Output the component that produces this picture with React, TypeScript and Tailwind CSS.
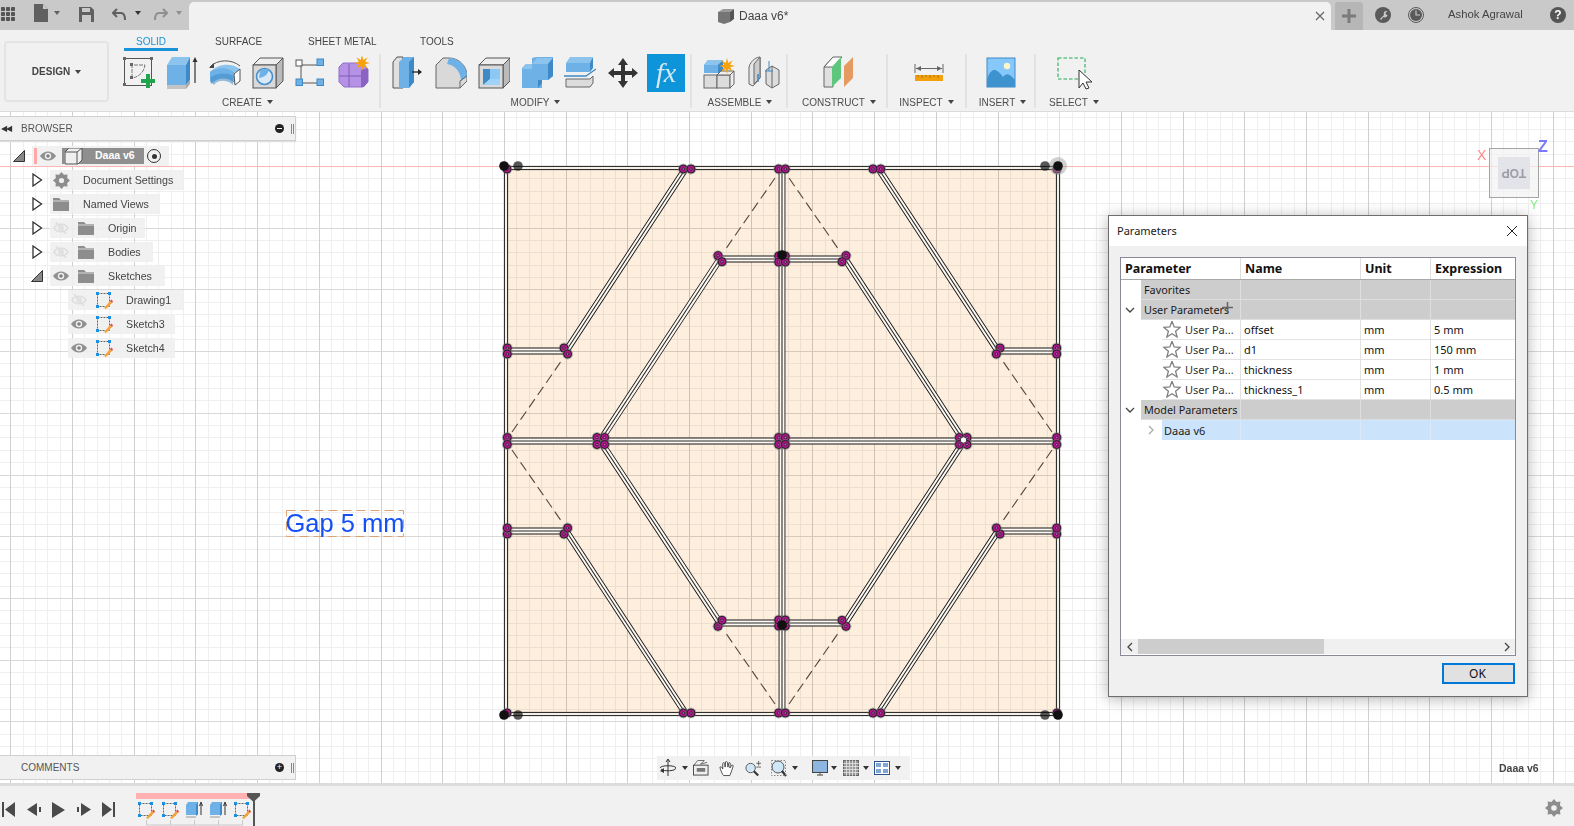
import React from "react";

const star = (cx: number, cy: number, r1: number, r2: number, n = 8) => {
  let d = "";
  for (let i = 0; i < n * 2; i++) {
    const r = i % 2 ? r2 : r1;
    const a = (Math.PI * i) / n - Math.PI / 2;
    d += `${i ? "L" : "M"}${(cx + r * Math.cos(a)).toFixed(1)} ${(cy + r * Math.sin(a)).toFixed(1)}`;
  }
  return d + "Z";
};

const Ico = ({ w = 32, h = 34, children }: { w?: number; h?: number; children: React.ReactNode }) => (
  <svg width={w} height={h} viewBox={`0 0 ${w} ${h}`} className="block shrink-0">{children}</svg>
);

const BLUE = "#6db1e6";
const DBLUE = "#3f8ac6";

const SketchIco = () => (
  <Ico>
    <rect x="1.5" y="2.5" width="27" height="27" fill="none" stroke="#555" strokeWidth="1" />
    <path d="M9 22V9H22C21 16 16 21 9 22Z" fill="none" stroke="#777" strokeDasharray="4 1" />
    {[[0, 1], [27, 1], [0, 27], [7, 7], [7, 20]].map(([x, y]) => (
      <rect key={`${x}${y}`} x={x} y={y} width="3" height="3" fill="#666" />
    ))}
    <path d="M23 18h4v5h5v4h-5v5h-4v-5h-5v-4h5z" fill="#1fa54c" />
  </Ico>
);
const ExtrudeIco = () => (
  <Ico>
    <path d="M1 9L6 1H24L20 9Z" fill="#8cc4ee" />
    <rect x="1" y="9" width="19" height="20" fill={BLUE} />
    <path d="M20 9L24 1V24L20 29Z" fill={DBLUE} />
    <path d="M1 29H20V33H1Z" fill="#c4c4c4" />
    <path d="M20 29L24 24V28L20 33Z" fill="#aaa" />
    <path d="M29 27V3" stroke="#333" strokeWidth="1.2" />
    <path d="M29 1L26.5 6H31.5Z" fill="#333" />
  </Ico>
);
const RevolveIco = () => (
  <Ico w={33} h={32}>
    <path d="M1 10C8 2 23 2 31 9" fill="none" stroke="#555" strokeWidth="1" />
    <path d="M0 11L5 6V11Z" fill="#444" />
    <path d="M1 21C3 12 20 9 27 17L31 12C22 5 8 7 1 15Z" fill="#8cc4ee" />
    <path d="M1 15C8 10 20 10 26 16L27 28C20 19 8 20 2 27L1 22Z" fill={BLUE} />
    <path d="M2 20C8 16 18 15 24 19V28C18 22 8 23 5 28L1 24Z" fill={DBLUE} opacity=".55" />
    <path d="M25 17L31 12V24L26 28Z" fill="#fff" stroke="#555" />
  </Ico>
);
const HoleIco = () => (
  <Ico>
    <path d="M1 9L8 2H31L24 9Z" fill="#eee" stroke="#555" />
    <path d="M24 9L31 2V25L24 32Z" fill="#bbb" stroke="#555" />
    <rect x="1" y="9" width="23" height="23" fill="#d9d9d9" stroke="#555" />
    <circle cx="12.5" cy="20.5" r="8" fill="#d8eafa" stroke="#4a8fc7" strokeWidth="1.6" />
    <path d="M8 15A8 8 0 0 1 17 14C15 19 13 21 7 22Z" fill={BLUE} />
  </Ico>
);
const PatternIco = () => (
  <Ico>
    <path d="M6 9H24M6 9V27M6 27H24" stroke="#555" strokeWidth="1" />
    <rect x="1" y="4" width="6" height="6" fill="#fff" stroke="#555" />
    <rect x="22" y="3" width="6.500" height="6.500" fill={BLUE} stroke="#3f8ac6" />
    <rect x="1" y="23" width="6.500" height="6.500" fill={BLUE} stroke="#3f8ac6" />
    <rect x="22" y="23" width="6.500" height="6.500" fill={BLUE} stroke="#3f8ac6" />
  </Ico>
);
const FormIco = () => (
  <Ico>
    <path d="M5 7H24L30 13V26L25 31H6L1 26V11Z" fill="#b592e6" stroke="#9270cc" />
    <path d="M23 14V31H26L30 26V12Z" fill="#8a63c4" />
    <path d="M1 20H23M11 8V31" stroke="#7e5cb8" strokeWidth="1" fill="none" />
    <path d={star(24, 7, 8, 3.400, 8)} fill="#f7a10c" />
  </Ico>
);
const PressPullIco = () => (
  <Ico>
    <path d="M1 6L5 1H11V32H1Z" fill="#e0e0e0" stroke="#555" />
    <path d="M7 6L12 1H22V26L17 32H7Z" fill={BLUE} />
    <path d="M17 6L22 1V26L17 32Z" fill={DBLUE} />
    <path d="M20 16H29" stroke="#222" strokeWidth="1.300" />
    <path d="M30 16L26 13V19Z" fill="#222" />
  </Ico>
);
const FilletIco = () => (
  <Ico>
    <path d="M1 32V9L8 2H14C24 2 32 10 32 20V25L25 32Z" fill="#d9d9d9" stroke="#666" />
    <path d="M14 2C24 2 32 10 32 20L26 25C26 16 20 9 12 8Z" fill={BLUE} />
    <path d="M25 32V25L32 20" fill="none" stroke="#666" />
  </Ico>
);
const ShellIco = () => (
  <Ico>
    <path d="M1 9L8 2H32L25 9Z" fill="#eee" stroke="#555" />
    <path d="M25 9L32 2V25L25 32Z" fill="#bbb" stroke="#555" />
    <rect x="1" y="9" width="24" height="23" fill="#dadada" stroke="#555" />
    <rect x="5" y="13" width="17" height="16" fill="#8cc8f5" />
    <path d="M5 13H12V23L5 29Z" fill="#3f8ac6" />
    <path d="M12 23H22V29H5Z" fill="#9ed2f8" />
  </Ico>
);
const CombineIco = () => (
  <Ico>
    <path d="M11 2L15 1V1H32V20L27 24H21V32H1V12L5 8H11Z" fill={BLUE} />
    <path d="M11 8L16 2H32L27 8Z" fill="#8cc4ee" />
    <path d="M1 13L5 8H11V13Z" fill="#8cc4ee" />
    <path d="M27 8L32 2V20L27 24Z" fill={DBLUE} />
    <path d="M17 24H21V27L17 32Z" fill={DBLUE} />
  </Ico>
);
const OffsetIco = () => (
  <Ico>
    <path d="M2 7L6 1H29L27 7Z" fill="#8cc4ee" />
    <rect x="2" y="7" width="24" height="9" fill={BLUE} />
    <path d="M26 7L29 1V12L26 16Z" fill={DBLUE} />
    <path d="M0 20H22L32 13" stroke="#3f8ac6" strokeWidth="1.300" fill="none" />
    <path d="M2 23H26L29 20V27L26 31H2Z" fill="#dcdcdc" stroke="#666" />
  </Ico>
);
const MoveIco = () => (
  <Ico>
    <path d="M16 2L21 9H18V15H25V12L31 17L25 22V19H18V25H21L16 32L11 25H14V19H7V22L1 17L7 12V15H14V9H11Z" fill="#333" />
  </Ico>
);
const AssembleIco = () => (
  <Ico>
    <path d="M1 9L5 4H17V17H1Z" fill={BLUE} />
    <path d="M1 9L5 4H20L16 9Z" fill="#8cc4ee" />
    <path d="M15 9L20 4V17H15Z" fill={DBLUE} />
    <rect x="1" y="19" width="13" height="13" fill="#dcdcdc" stroke="#666" />
    <rect x="14" y="19" width="13" height="13" fill="#dcdcdc" stroke="#666" />
    <path d="M14 19L18 15H31L27 19ZM27 19L31 15V28L27 32Z" fill="#eee" stroke="#666" />
    <path d={star(24, 10, 8, 3.400, 8)} fill="#f7a10c" />
  </Ico>
);
const JointIco = () => (
  <Ico>
    <path d="M1 11C3 4 9 1 12 1V22L5 30L1 28Z" fill="#e6e6e6" stroke="#666" />
    <path d="M6 8L12 1V22L6 28Z" fill="#ccc" stroke="#666" />
    <path d="M18 14L24 10L31 14V28L24 32L18 28Z" fill="#ddd" stroke="#666" />
    <path d="M24 10V32" stroke="#666" />
    <path d="M10 18V26" stroke="#3f8ac6" strokeWidth="1.600" />
    <path d="M21 5V15M17 15H25" stroke="#3f8ac6" strokeWidth="1" />
  </Ico>
);
const ConstructIco = () => (
  <Ico w={31}>
    <path d="M1 11L10 1V31H1Z" fill="#e0e0e0" stroke="#666" />
    <path d="M1 11L10 1H19L10 11Z" fill="#fff" stroke="#666" />
    <path d="M9 11L18 1V22L9 31Z" fill="#5fc67d" />
    <path d="M21 10L30 1V22L21 31Z" fill="#e59a62" />
  </Ico>
);
const RulerIco = () => (
  <Ico w={30}>
    <path d="M1 8V17M29 8V17" stroke="#666" />
    <path d="M2 12.500H28" stroke="#666" />
    <path d="M2 12.500L7 10V15ZM28 12.500L23 10V15Z" fill="#666" />
    <rect x="1" y="19" width="28" height="6" fill="#f2a10d" />
    <path d="M4 19v2M8 19v3M12 19v2M16 19v3M20 19v2M24 19v3" stroke="#9a6a10" strokeWidth=".8" />
  </Ico>
);
const InsertIco = () => (
  <Ico w={30}>
    <rect x="1" y="2" width="28" height="29" fill="#87c8fb" stroke="#3f8ac6" />
    <circle cx="21" cy="10" r="3.200" fill="#fdf6c8" />
    <path d="M1 23C6 10 11 13 17 21C21 16 24 18 29 24V31H1Z" fill="#3e92ce" />
  </Ico>
);
const SelectIco = () => (
  <Ico w={36}>
    <rect x="1" y="2" width="27" height="21" fill="none" stroke="#25ad56" strokeWidth="1.100" strokeDasharray="3.500 2" />
    <path d="M22 14V32L26 27L29 33L32 32L29 26H35Z" fill="#fff" stroke="#333" strokeWidth="1" />
  </Ico>
);

const Tool = ({ children, className = "" }: { children: React.ReactNode; className?: string }) => (
  <div className={`flex items-center ${className}`}>{children}</div>
);

const Caret = ({ className = "" }: { className?: string }) => (
  <span className={`inline-block w-0 h-0 border-x-[3px] border-x-transparent border-t-[4px] border-t-[#444] ${className}`} />
);

const Group = ({ label, width, pad, gap, children, last, labelCls = "" }: { label: string; width: string; pad: string; gap: string; children: React.ReactNode; last?: boolean; labelCls?: string }) => (
  <div className={`${width} flex flex-col ${last ? "" : "border-r-2 border-[#e2e2e2]"}`}>
    <div className={`h-[38px] flex items-center ${pad} ${gap}`}>{children}</div>
    <div className={`h-[16px] flex items-center justify-center gap-[5px] text-[10px] text-[#4c4c4c] pt-[4px] ${labelCls}`}>
      {label}
      <Caret />
    </div>
  </div>
);

const Eye = ({ off }: { off?: boolean }) => (
  <svg width="16" height="12" viewBox="0 0 16 12" className="block shrink-0">
    {off ? (
      <g stroke="#dedede" fill="none" strokeWidth="1.500">
        <path d="M1 6C4 1 12 1 15 6C12 11 4 11 1 6Z" />
        <circle cx="8" cy="6" r="2" />
        <path d="M3 0L13 12" />
      </g>
    ) : (
      <g>
        <path d="M0 6C4 0 12 0 16 6C12 12 4 12 0 6Z" fill="#909090" />
        <circle cx="8" cy="6" r="3.200" fill="#eee" />
        <circle cx="8" cy="6" r="1.800" fill="#808080" />
      </g>
    )}
  </svg>
);
const Folder = () => (
  <svg width="16" height="13" viewBox="0 0 16 13" className="block shrink-0">
    <path d="M0 0H6L8 2H16V13H0Z" fill="#8d8d8d" />
    <path d="M0 3H16" stroke="#eee" strokeWidth=".8" />
  </svg>
);
const Gear = () => (
  <svg width="17" height="17" viewBox="0 0 17 17" className="block shrink-0">
    <path d={star(8.500, 8.500, 8.500, 6.200, 8)} fill="#8d8d8d" />
    <circle cx="8.500" cy="8.500" r="5.600" fill="#8d8d8d" />
    <circle cx="8.500" cy="8.500" r="2.600" fill="#eee" />
  </svg>
);
const SketchMini = () => (
  <svg width="17" height="17" viewBox="0 0 17 17" className="block shrink-0">
    <rect x="1.500" y="1.500" width="12" height="13" fill="none" stroke="#666" strokeDasharray="2 1" />
    <rect x="0" y="0" width="3" height="3" fill="#1b8fe0" />
    <rect x="12" y="0" width="3" height="3" fill="#1b8fe0" />
    <rect x="0" y="13" width="3" height="3" fill="#1b8fe0" />
    <path d="M8 16L14 9L16 11L10 17Z" fill="#f2a33c" />
    <path d="M14 9L15.500 7.500L17 9.500L16 11Z" fill="#e8453c" />
  </svg>
);
const TriOpen = () => (
  <svg width="11" height="14" viewBox="0 0 11 14" className="block">
    <path d="M1 1L9.500 7L1 13Z" fill="#fff" stroke="#333" strokeWidth="1.300" />
  </svg>
);
const TriDown = () => (
  <svg width="12" height="12" viewBox="0 0 12 12" className="block">
    <path d="M11.500 .5V11.500H.5Z" fill="#888" stroke="#333" />
  </svg>
);

const Row = ({ ml, w, tri, children }: { ml: string; w: string; tri?: React.ReactNode; children: React.ReactNode }) => (
  <div className="flex h-5 items-center mb-1 relative">
    <div className={`${ml} ${w} h-5 flex items-center bg-[#f0f0f0]/90 text-[#444] text-[10.700px]`}>{children}</div>
    {tri}
  </div>
);

const OTri = () => (
  <div className="absolute left-[32px] top-[3px]"><TriOpen /></div>
);

const Label = ({ className, children }: { className: string; children: React.ReactNode }) => (
  <span className={`${className} pt-[1px]`}>{children}</span>
);

const Browser = () => (
  <div className="absolute left-0 top-[4px] w-[296px]">
    <div className="h-[25px] bg-[#f1f1f1] border border-l-0 border-[#cfcfcf] flex items-center text-[10px] text-[#555] relative shadow-[0_1px_1px_#ddd]">
      <span className="absolute left-[1px] text-[8px] text-[#333] tracking-[-1px]">◀◀</span>
      <span className="ml-[21px]">BROWSER</span>
      <span className="absolute left-[275px] w-[9px] h-[9px] rounded-full bg-[#222] flex items-center justify-center"><span className="w-[5px] h-[1.500px] bg-white" /></span>
      <span className="absolute left-[291px] w-[3px] h-[10px] border-x border-[#888]" />
    </div>
    <div className="mt-[5px]">
      <div className="flex h-5 items-center mb-1 relative">
        <div className="absolute left-[13px] top-[4px]"><TriDown /></div>
        <div className="ml-[32px] w-[137px] h-5 flex items-center bg-[#f0f0f0]/90">
          <span className="ml-[2px] w-[3px] h-4 bg-[#ffa8a8]" />
          <span className="ml-[3px]"><Eye /></span>
          <span className="ml-[6px] w-[82px] h-4 bg-[#8f8f8f] flex items-center relative">
            <svg width="18" height="17" viewBox="0 0 18 17" className="absolute left-[3px] top-0">
              <path d="M0 4L4 0H17V12L13 16H0Z" fill="#efefef" stroke="#555" />
              <path d="M12 16V4L17 0M0 4H12" fill="none" stroke="#555" />
            </svg>
            <span className="ml-[33px] text-[10.500px] font-bold text-white">Daaa v6</span>
          </span>
          <span className="ml-[3px] w-[14px] h-[14px] rounded-full border border-[#333] flex items-center justify-center"><span className="w-[5px] h-[5px] rounded-full bg-[#333]" /></span>
        </div>
      </div>
      <Row ml="ml-[50px]" w="w-[133px]" tri={<OTri />}>
        <span className="ml-[3px]"><Gear /></span>
        <Label className="ml-[13px]">Document Settings</Label>
      </Row>
      <Row ml="ml-[50px]" w="w-[110px]" tri={<OTri />}>
        <span className="ml-[3px]"><Folder /></span>
        <Label className="ml-[14px]">Named Views</Label>
      </Row>
      <Row ml="ml-[50px]" w="w-[95px]" tri={<OTri />}>
        <span className="ml-[3px]"><Eye off /></span>
        <span className="ml-[9px]"><Folder /></span>
        <Label className="ml-[14px]">Origin</Label>
      </Row>
      <Row ml="ml-[50px]" w="w-[103px]" tri={<OTri />}>
        <span className="ml-[3px]"><Eye off /></span>
        <span className="ml-[9px]"><Folder /></span>
        <Label className="ml-[14px]">Bodies</Label>
      </Row>
      <Row ml="ml-[50px]" w="w-[115px]" tri={<div className="absolute left-[31px] top-[4px]"><TriDown /></div>}>
        <span className="ml-[3px]"><Eye /></span>
        <span className="ml-[9px]"><Folder /></span>
        <Label className="ml-[14px]">Sketches</Label>
      </Row>
      <Row ml="ml-[68px]" w="w-[115px]">
        <span className="ml-[3px]"><Eye off /></span>
        <span className="ml-[9px]"><SketchMini /></span>
        <Label className="ml-[13px]">Drawing1</Label>
      </Row>
      <Row ml="ml-[68px]" w="w-[107px]">
        <span className="ml-[3px]"><Eye /></span>
        <span className="ml-[9px]"><SketchMini /></span>
        <Label className="ml-[13px]">Sketch3</Label>
      </Row>
      <Row ml="ml-[68px]" w="w-[107px]">
        <span className="ml-[3px]"><Eye /></span>
        <span className="ml-[9px]"><SketchMini /></span>
        <Label className="ml-[13px]">Sketch4</Label>
      </Row>
    </div>
  </div>
);

const Chev = ({ dir = "down", light }: { dir?: "down" | "left" | "right"; light?: boolean }) => (
  <svg width="10" height="10" viewBox="0 0 10 10" className="block">
    <path d={dir === "right" ? "M3 1L7 5L3 9" : dir === "left" ? "M7 1L3 5L7 9" : "M1 3L5 7L9 3"} fill="none" stroke={light ? "#aaa" : "#444"} strokeWidth="1.300" />
  </svg>
);

const StarO = () => (
  <svg width="18" height="17" viewBox="0 0 18 17" className="block">
    <path d={star(9, 9, 8.700, 3.800, 5)} fill="#fff" stroke="#808080" strokeWidth="1.300" />
  </svg>
);

const GrayRow = ({ label, chev }: { label: string; chev?: boolean }) => (
  <div className="flex h-5">
    <div className="w-[20px] flex items-center justify-center pr-[2px]">{chev && <Chev />}</div>
    <div className="w-[100px] bg-[#cdcdcd] border-r border-b border-[#dedede] flex items-center pl-[3px] pt-[2px] text-[10.800px] whitespace-nowrap">{label}</div>
    <div className="w-[120px] bg-[#cdcdcd] border-r border-b border-[#dedede]" />
    <div className="w-[70px] bg-[#cdcdcd] border-r border-b border-[#dedede]" />
    <div className="flex-1 bg-[#cdcdcd] border-b border-[#dedede]" />
  </div>
);

const ParamRow = ({ name, exp }: { name: string; exp: string }) => (
  <div className="flex h-5 text-[#111]">
    <div className="w-[41px]" />
    <div className="w-[79px] border-r border-b border-[#e2e2e2] flex items-center">
      <span className="ml-[1px]"><StarO /></span>
      <span className="ml-[4px] pt-[2px] text-[#333]">User Pa...</span>
    </div>
    <div className="w-[120px] border-r border-b border-[#e2e2e2] flex items-center pl-[3px] pt-[2px]">{name}</div>
    <div className="w-[70px] border-r border-b border-[#e2e2e2] flex items-center pl-[3px] pt-[2px]">mm</div>
    <div className="flex-1 border-b border-[#e2e2e2] flex items-center pl-[3px] pt-[2px]">{exp}</div>
  </div>
);

const Dialog = () => (
  <div className="absolute left-[1108px] top-[103px] w-[420px] h-[482px] bg-[#f0f0f0] border border-[#6e6e6e] shadow-[0_2px_14px_rgba(0,0,0,0.3)] flex flex-col font-['Noto_Sans',sans-serif] text-[11px] text-[#1a1a1a]">
    <div className="h-[30px] bg-white flex items-center justify-between shrink-0">
      <span className="ml-[8px] text-[11px]">Parameters</span>
      <svg width="12" height="12" viewBox="0 0 12 12" className="mr-[9px]"><path d="M1 1L11 11M11 1L1 11" stroke="#222" strokeWidth="1" /></svg>
    </div>
    <div className="mx-[11px] mt-[11px] h-[399px] bg-white border border-[#8a8a96] flex flex-col">
      <div className="flex h-[22px] text-[12.500px] font-bold text-[#111] border-b border-[#a8a8a8]">
        <div className="w-[120px] pl-[4px] pt-[2px] border-r border-[#dedede] flex items-center">Parameter</div>
        <div className="w-[120px] pl-[4px] pt-[2px] border-r border-[#dedede] flex items-center">Name</div>
        <div className="w-[70px] pl-[4px] pt-[2px] border-r border-[#dedede] flex items-center">Unit</div>
        <div className="flex-1 pl-[4px] pt-[2px] flex items-center">Expression</div>
      </div>
      <GrayRow label="Favorites" />
      <div className="relative">
        <GrayRow label="User Parameters" chev />
        <svg width="11" height="11" viewBox="0 0 11 11" className="absolute left-[101px] top-[2px]"><path d="M5.500 0V11M0 5.500H11" stroke="#666" strokeWidth="1.500" /></svg>
      </div>
      <ParamRow name="offset" exp="5 mm" />
      <ParamRow name="d1" exp="150 mm" />
      <ParamRow name="thickness" exp="1 mm" />
      <ParamRow name="thickness_1" exp="0.5 mm" />
      <GrayRow label="Model Parameters" chev />
      <div className="flex h-5">
        <div className="w-[41px] flex items-center justify-end pr-[6px]"><Chev dir="right" light /></div>
        <div className="w-[79px] bg-[#cce4fb] border-r border-[#dbe9f6] flex items-center pl-[2px] pt-[2px]">Daaa v6</div>
        <div className="w-[120px] bg-[#cce4fb] border-r border-[#dbe9f6]" />
        <div className="w-[70px] bg-[#cce4fb] border-r border-[#dbe9f6]" />
        <div className="flex-1 bg-[#cce4fb]" />
      </div>
      <div className="flex-1" />
      <div className="h-[15px] mb-[1px] bg-[#f0f0f0] flex items-center">
        <span className="w-[17px] flex justify-center"><Chev dir="left" /></span>
        <span className="w-[186px] h-[15px] bg-[#cdcdcd]" />
        <span className="flex-1" />
        <span className="w-[17px] flex justify-center"><Chev dir="right" /></span>
      </div>
    </div>
    <div className="flex justify-end mt-[7px] mr-[12px]">
      <div className="w-[73px] h-[21px] pr-[2px] bg-[#e1e1e1] border-2 border-[#0078d7] flex items-center justify-center text-[12px] text-[#111]">OK</div>
    </div>
  </div>
);

const inner: [number, number][][] = [
  [[686, 168], [566, 351], [506, 351]],
  [[878, 168], [998, 351], [1058, 351]],
  [[566, 531], [506, 531]],
  [[686, 714], [566, 531]],
  [[878, 714], [998, 531], [1058, 531]],
  [[782, 168], [782, 714]],
  [[506, 441], [1058, 441]],
  [[720, 259], [845, 259], [964, 441], [845, 623], [720, 623], [600, 441], [720, 259]],
];
const toD = (p: [number, number][]) => p.map(([x, y], i) => `${i ? "L" : "M"}${x} ${y}`).join("");

const quad: [number, number][] = [
  [683.3, 169], [691, 169], [778.7, 169], [507, 169],
  [718, 255.7], [722, 261.7], [778.7, 256], [778.7, 262],
  [507.3, 348], [507.3, 354], [564, 348], [567.6, 354],
  [597, 437.5], [604.6, 437.5], [507.3, 437.5], [778.7, 437.5],
];
const points: [number, number][] = quad.flatMap(([x, y]) => [
  [x, y], [1564 - x, y], [x, 882 - y], [1564 - x, 882 - y],
] as [number, number][]);

const dashed = [
  [775, 178, 725, 250], [789, 178, 839, 250], [775, 704, 725, 632], [789, 704, 839, 632],
  [512, 432, 562, 360], [512, 450, 562, 522], [1052, 432, 1002, 360], [1052, 450, 1002, 522],
];

const xs = Array.from({ length: 130 }, (_, i) => 10.3 - 12.34 + i * 12.34);
const ys = Array.from({ length: 57 }, (_, i) => 166 - 12.34 * 5 + i * 12.34);

const Scene = () => (
  <svg width="1574" height="671" viewBox="0 112 1574 671" className="absolute left-0 top-0 block">
    <g shapeRendering="crispEdges">
      {xs.map((x, i) => (i - 1) % 5 !== 0 && <path key={x} d={`M${Math.round(x) + 0.5} 112V783`} stroke="#efefef" />)}
      {ys.map((y, i) => i % 5 !== 0 && <path key={y} d={`M0 ${Math.round(y) + 0.5}H1574`} stroke="#efefef" />)}
      {xs.map((x, i) => (i - 1) % 5 === 0 && <path key={x} d={`M${Math.round(x) + 0.5} 112V783`} stroke="#d0d0d0" />)}
      {ys.map((y, i) => i % 5 === 0 && i !== 5 && <path key={y} d={`M0 ${Math.round(y) + 0.5}H1574`} stroke="#d8d8d8" />)}
      <path d="M0 166.500H1574" stroke="#ffb4b4" />
      <path d="M1059.500 112V166" stroke="#c6f0c6" />
    </g>
    <rect x="506" y="168" width="552" height="546" fill="#fdeedd" className="mix-blend-multiply" />
    {dashed.map(([a, b, c, d]) => (
      <path key={`${a}${b}${c}`} d={`M${a} ${b}L${c} ${d}`} stroke="#54463c" strokeWidth="1.100" strokeDasharray="10 5" />
    ))}
    <rect x="506" y="168" width="552" height="546" fill="none" stroke="#1a1a1a" strokeWidth="4.200" />
    <rect x="506" y="168" width="552" height="546" fill="none" stroke="#f6f0ea" strokeWidth="2.200" />
    {inner.map((p) => <path key={toD(p)} d={toD(p)} fill="none" stroke="#161616" strokeWidth="6.800" />)}
    {inner.map((p) => <path key={toD(p)} d={toD(p)} fill="none" stroke="#fdf8f2" strokeWidth="5" />)}
    {inner.map((p) => <path key={toD(p)} d={toD(p)} fill="none" stroke="#2a2a2a" strokeWidth="1.100" />)}
    {points.map(([x, y]) => (
      <g key={`${x}-${y}`}>
        <circle cx={x} cy={y} r="5.400" fill="#777" opacity=".55" />
        <circle cx={x} cy={y} r="4" fill="#b3128f" stroke="#222" strokeWidth="1" />
        <circle cx={x} cy={y} r="1.300" fill="#c85cb4" stroke="#222" strokeWidth=".8" />
      </g>
    ))}
    <circle cx="1058" cy="166" r="9" fill="#999" opacity=".45" />
    {[[504, 166, 1], [518, 166, .7], [1045, 166, .7], [1058, 166, 1], [504, 715, 1], [518, 715, .7], [1045, 715, .7], [1058, 715, 1], [782, 255, 1], [782, 625, 1]].map(([x, y, o]) => (
      <circle key={`${x}-${y}`} cx={x} cy={y} r="4.800" fill="#111" opacity={o} />
    ))}
    <circle cx="963.500" cy="440" r="3.200" fill="#fff" stroke="#333" />
  </svg>
);

const ViewCube = () => (
  <div className="absolute left-[1489px] top-[36px] w-[50px] h-[50px] border border-[#a4a4a4] bg-[#f2f2f2]/70 flex items-center justify-center">
    <div className="w-[32px] h-[32px] bg-[#e2e4ea] flex items-center justify-center text-[12px] font-bold text-[#9c9ca6] rotate-180">TOP</div>
    <span className="absolute -left-[13px] -top-[4px] text-[14px] text-[#ff8a8a]">X</span>
    <span className="absolute left-[48px] -top-[14px] text-[16px] font-bold text-[#7a7aff]">Z</span>
    <span className="absolute left-[40px] top-[47px] text-[12px] text-[#80ee80]">Y</span>
  </div>
);

const Caret2 = ({ className = "" }: { className?: string }) => <span className={`block w-0 h-0 shrink-0 border-x-[3px] border-x-transparent border-t-[4px] border-t-[#333] ${className}`} />;

const NavBar = () => (
  <div className="absolute left-[657px] top-[644px] w-[253px] h-[24px] bg-[#f1f1f1] flex items-center pl-[3px]">
    <svg width="16" height="18" viewBox="0 0 16 18" className="shrink-0"><path d="M8 1V17M6 3L8 0L10 3" stroke="#333" fill="none" /><path d="M0 9C0 6 16 6 16 9C16 12 4 13 1 10" stroke="#333" fill="none" /><path d="M0 12L4 9V14Z" fill="#333" /></svg>
    <Caret2 className="ml-[6px]" />
    <svg width="16" height="16" viewBox="0 0 17 16" className="ml-[5px] shrink-0"><path d="M1 5L5 0H12L8 4L15 2" stroke="#666" fill="none" /><rect x=".5" y="5" width="15.500" height="10.500" fill="#eee" stroke="#444" /><rect x="4" y="8" width="9" height="4" fill="#777" /></svg>
    <svg width="16" height="17" viewBox="0 0 17 17" className="ml-[10px] shrink-0"><path d="M4 15C2 11 1 8 1 7C2 6 3 7 4 9L4 3C5 2 5.500 2 6 3L6.500 7L7 1.500C8 1 8.500 1 9 2L9.500 7L10.500 2.500C11.500 2 12 2.500 12 3.500L11.500 8L13.500 5C14.500 4.500 15 5 15 6C14 9 13 13 11.500 16H5Z" fill="#fff" stroke="#333" strokeWidth=".9" /></svg>
    <svg width="16" height="17" viewBox="0 0 17 17" className="ml-[10px] shrink-0"><circle cx="6" cy="8" r="5" fill="#cfe6f6" stroke="#555" /><path d="M9.500 11.500L14 16" stroke="#333" strokeWidth="2.200" /><path d="M12 3H17M14.500 .5V5.500M12 7H17" stroke="#444" strokeWidth=".8" /></svg>
    <svg width="16" height="17" viewBox="0 0 16 17" className="ml-[10px] shrink-0"><circle cx="7" cy="7" r="6" fill="#cfe6f6" stroke="#555" /><path d="M11 11L15 16" stroke="#333" strokeWidth="2.200" /><rect x=".5" y=".5" width="14" height="15" fill="none" stroke="#888" strokeDasharray="1.500 1.500" /></svg>
    <Caret2 className="ml-[5px]" />
    <svg width="16" height="17" viewBox="0 0 16 17" className="ml-[14px] shrink-0"><rect x=".5" y=".5" width="15" height="12" fill="#8db6e0" stroke="#444" strokeWidth="1" /><path d="M5 15H11M8 13V15" stroke="#777" strokeWidth="1.300" /></svg>
    <Caret2 className="ml-[3px]" />
    <svg width="16" height="16" viewBox="0 0 16 16" className="ml-[6px] shrink-0"><rect x=".5" y=".5" width="15" height="15" fill="#999" stroke="#666" /><path d="M3.500 0V16M6.500 0V16M9.500 0V16M12.500 0V16M0 3.500H16M0 6.500H16M0 9.500H16M0 12.500H16" stroke="#eee" strokeWidth=".7" /></svg>
    <Caret2 className="ml-[4px]" />
    <svg width="16" height="14" viewBox="0 0 16 14" className="ml-[5px] shrink-0"><rect x=".5" y=".5" width="15" height="13" fill="#fff" stroke="#2d528c" /><rect x="2" y="2" width="5" height="4" fill="#7fa6d6" /><rect x="9" y="2" width="5" height="4" fill="#7fa6d6" /><rect x="2" y="8" width="5" height="4" fill="#7fa6d6" /><rect x="9" y="8" width="5" height="4" fill="#7fa6d6" /></svg>
    <Caret2 className="ml-[5px]" />
  </div>
);

const TimeSketch = () => (
  <svg width="18" height="17" viewBox="0 0 18 17" className="block">
    <rect x="1.500" y="1.500" width="12" height="12" fill="none" stroke="#666" strokeDasharray="2 1" />
    <rect x="0" y="0" width="3" height="3" fill="#1b8fe0" /><rect x="12" y="0" width="3" height="3" fill="#1b8fe0" /><rect x="0" y="12" width="3" height="3" fill="#1b8fe0" />
    <path d="M8 16L14 9L16 11L10 17Z" fill="#f2a33c" /><path d="M14 9L15.500 7.500L17 9.500L16 11Z" fill="#e8453c" />
  </svg>
);
const TimeExtrude = () => (
  <svg width="18" height="17" viewBox="0 0 18 17" className="block">
    <path d="M0 3L2 0H12V13H0Z" fill="#6db1e6" /><path d="M10 3L12 0V12L10 14Z" fill="#3f8ac6" /><path d="M0 14H10V16H0Z" fill="#c4c4c4" />
    <path d="M15 13V2M13.500 4L15 0L16.500 4" stroke="#333" fill="none" />
  </svg>
);

const Timeline = () => (
  <div className="h-[43px] bg-[#f1f1f1] border-t-[3px] border-[#dcdcdc] relative flex items-center">
    <div className="flex items-center gap-[11.500px] ml-[2px] mt-[7px]">
      <svg width="13" height="15" viewBox="0 0 13 15" className="shrink-0"><rect width="2" height="15" fill="#4a4a4a" /><path d="M13 0V15L3 7.500Z" fill="#4a4a4a" /></svg>
      <svg width="14" height="13" viewBox="0 0 14 13" className="shrink-0"><path d="M10 0V13L0 6.500Z" fill="#4a4a4a" /><rect x="12" y="4" width="2" height="5" fill="#4a4a4a" /></svg>
      <svg width="13" height="16" viewBox="0 0 13 16" className="shrink-0"><path d="M0 0L13 8L0 16Z" fill="#4a4a4a" /></svg>
      <svg width="14" height="13" viewBox="0 0 14 13" className="shrink-0"><path d="M4 0V13L14 6.500Z" fill="#4a4a4a" /><rect x="0" y="4" width="2" height="5" fill="#4a4a4a" /></svg>
      <svg width="13" height="15" viewBox="0 0 13 15" className="shrink-0"><rect x="11" width="2" height="15" fill="#4a4a4a" /><path d="M0 0V15L10 7.500Z" fill="#4a4a4a" /></svg>
    </div>
    <div className="ml-[21px] w-[116px] flex flex-col self-start mt-[7px] relative">
      <div className="h-[6px] bg-[#ffb0b0]" />
      <div className="flex gap-[6px] pl-[2px] mt-[3px]">
        <TimeSketch /><TimeSketch /><TimeExtrude /><TimeExtrude /><TimeSketch />
      </div>
    </div>
    <svg width="120" height="6" viewBox="0 0 120 6" className="absolute left-[140px] bottom-0">
      <path d="M6.500 0V5H102.500V0M30.500 0V5M54.500 0V5M78.500 0V5" fill="none" stroke="#c8c8c8" />
    </svg>
    <svg width="14" height="34" viewBox="0 0 14 34" className="absolute left-[247px] top-[7px]">
      <path d="M0 0H13V3L6.500 9L0 3Z" fill="#555" /><rect x="6" y="6" width="2" height="28" fill="#555" />
    </svg>
    <svg width="18" height="18" viewBox="0 0 18 18" className="absolute left-[1545px] top-[13px]">
      <path d={star(9, 9, 9, 6.500, 8)} fill="#8d8d8d" /><circle cx="9" cy="9" r="6" fill="#8d8d8d" /><circle cx="9" cy="9" r="2.800" fill="#f1f1f1" />
    </svg>
  </div>
);

const TitleBar = () => (
  <div className="h-[30px] bg-[#c9c9c9] flex items-end text-[#444] shrink-0">
    <div className="w-[189px] h-[30px] flex items-center relative">
      <svg width="15" height="15" viewBox="0 0 15 15" className="absolute left-[1px] top-[7px]">
        {[0, 5, 10].flatMap((y) => [0, 5, 10].map((x) => <rect key={`${x}${y}`} x={x} y={y} width="4" height="4" rx=".8" fill="#555" />))}
      </svg>
      <svg width="14" height="18" viewBox="0 0 14 18" className="absolute left-[34px] top-[4px]"><path d="M0 0H9L14 5V18H0Z" fill="#606060" /><path d="M9 0V5H14Z" fill="#c9c9c9" /></svg>
      <Caret2 className="absolute left-[54px] top-[11px] border-t-[#606060]" />
      <svg width="15" height="15" viewBox="0 0 15 15" className="absolute left-[79px] top-[7px]"><path d="M0 0H12L15 3V15H0Z" fill="#606060" /><rect x="3" y="1" width="8" height="4" fill="#c9c9c9" /><rect x="3" y="8" width="9" height="7" fill="#c9c9c9" /></svg>
      <svg width="14" height="13" viewBox="0 0 14 13" className="absolute left-[112px] top-[8px]"><path d="M5 1L1 5L5 9M1 5H9C12 5 13 8 13 12" fill="none" stroke="#606060" strokeWidth="2" /></svg>
      <Caret2 className="absolute left-[135px] top-[11px]" />
      <svg width="14" height="13" viewBox="0 0 14 13" className="absolute left-[154px] top-[8px]"><path d="M9 1L13 5L9 9M13 5H5C2 5 1 8 1 12" fill="none" stroke="#8f8f8f" strokeWidth="2" /></svg>
      <span className="absolute left-[176px] top-[11px] w-0 h-0 border-x-[3px] border-x-transparent border-t-[4px] border-t-[#8f8f8f]" />
    </div>
    <div className="w-[1142px] h-[28px] bg-[#f1f1f1] rounded-t-[5px] flex items-center relative">
      <div className="absolute left-[529px] flex items-center gap-[5px] text-[12px] text-[#444]">
        <svg width="16" height="15" viewBox="0 0 16 15"><path d="M0 3L5 0H16L12 3Z" fill="#999" /><path d="M0 3H12V13L6 15L0 13Z" fill="#757575" /><path d="M12 3L16 0V10L12 13Z" fill="#555" /></svg>
        <span>Daaa v6*</span>
      </div>
      <svg width="10" height="10" viewBox="0 0 10 10" className="absolute right-[6px] top-[9px]"><path d="M1 1L9 9M9 1L1 9" stroke="#666" strokeWidth="1.200" /></svg>
    </div>
    <div className="ml-[4px] w-[28px] h-[28px] bg-[#b6b6b6] rounded-t-[3px] flex items-center justify-center">
      <svg width="14" height="14" viewBox="0 0 14 14"><path d="M7 0V14M0 7H14" stroke="#7b7b7b" strokeWidth="3" /></svg>
    </div>
    <div className="flex-1 h-[30px] flex items-center">
      <svg width="16" height="16" viewBox="0 0 16 16" className="ml-[12px] shrink-0"><circle cx="8" cy="8" r="8" fill="#5a5a5a" /><path d="M5 12L9 8C8 5 10 3.500 12.500 4L10.500 6L11 7.500L12.500 8C12.500 10 10 11 8.500 10L6 13Z" fill="#c9c9c9" /></svg>
      <svg width="16" height="16" viewBox="0 0 16 16" className="ml-[17px] shrink-0"><circle cx="8" cy="8" r="7.500" fill="none" stroke="#5a5a5a" /><circle cx="8" cy="8" r="6" fill="#5a5a5a" /><path d="M8 3.500V8H12" fill="none" stroke="#c9c9c9" strokeWidth="1.200" /></svg>
      <span className="ml-[24px] pb-[2px] text-[11.300px] text-[#444] whitespace-nowrap w-[102px] shrink-0">Ashok Agrawal</span>
      <span className="w-[16px] h-[16px] shrink-0 rounded-full bg-[#555] text-white text-[12px] font-bold flex items-center justify-center">?</span>
    </div>
  </div>
);

const Toolbar = () => (
  <div className="h-[82px] bg-[#f1f1f1] border-b border-[#dcdcdc] flex shrink-0">
    <div className="ml-[4px] mt-[11px] w-[105px] h-[61px] border-2 border-[#e4e4e4] rounded-[4px] flex items-center justify-center gap-[5px] text-[10px] font-bold text-[#444]">
      DESIGN
      <Caret />
    </div>
    <div className="ml-[9px] flex flex-col">
      <div className="h-[24px] flex text-[10px] text-[#444] relative">
        <div className="absolute left-[6px] top-[4px] w-[54px] h-[17px] border-b-[3px] border-[#1a92d8] text-center text-[#1a92d8] leading-[15px]">SOLID</div>
        <span className="absolute left-[97px] top-[4px] leading-[15px]">SURFACE</span>
        <span className="absolute left-[190px] top-[4px] leading-[15px] whitespace-nowrap">SHEET METAL</span>
        <span className="absolute left-[302px] top-[4px] leading-[15px]">TOOLS</span>
      </div>
      <div className="flex">
        <Group label="CREATE" width="w-[263px]" pad="pl-[5px]" gap="gap-[11px]" labelCls="pr-[2px]">
          <Tool><SketchIco /></Tool><Tool><ExtrudeIco /></Tool><Tool><RevolveIco /></Tool>
          <Tool className="-ml-[1px]"><HoleIco /></Tool><Tool><PatternIco /></Tool><Tool><FormIco /></Tool>
        </Group>
        <Group label="MODIFY" width="w-[311px]" pad="pl-[11px]" gap="gap-[11px]">
          <Tool><PressPullIco /></Tool><Tool><FilletIco /></Tool><Tool><ShellIco /></Tool><Tool><CombineIco /></Tool><Tool><OffsetIco /></Tool><Tool><MoveIco /></Tool>
          <div className="-ml-[3px] w-[38px] h-[38px] bg-[#0e95d9] flex items-center justify-center font-['Liberation_Serif',serif] italic text-[28px] text-[#d8e8f2] leading-none">fx</div>
        </Group>
        <Group label="ASSEMBLE" width="w-[96px]" pad="pl-[11px]" gap="gap-[13px]" labelCls="pl-[2px]">
          <Tool><AssembleIco /></Tool><Tool><JointIco /></Tool>
        </Group>
        <Group label="CONSTRUCT" width="w-[100px]" pad="pl-[35px]" gap="gap-0" labelCls="pl-[4px]">
          <Tool><ConstructIco /></Tool>
        </Group>
        <Group label="INSPECT" width="w-[79px]" pad="pl-[26px]" gap="gap-0">
          <Tool><RulerIco /></Tool>
        </Group>
        <Group label="INSERT" width="w-[69px]" pad="pl-[19px]" gap="gap-0" labelCls="pl-[4px]">
          <Tool><InsertIco /></Tool>
        </Group>
        <Group label="SELECT" width="w-[76px]" pad="pl-[21px]" gap="gap-0" last>
          <Tool><SelectIco /></Tool>
        </Group>
      </div>
    </div>
  </div>
);

export default function App() {
  return (
    <div className="w-[1574px] h-[826px] overflow-hidden flex flex-col bg-white font-['Liberation_Sans',Arial,sans-serif]">
      <TitleBar />
      <Toolbar />
      <div className="relative h-[671px] shrink-0 overflow-hidden">
        <Scene />
        <Browser />
        <div className="absolute left-0 top-[643px] w-[296px] h-[25px] bg-[#f1f1f1] border border-l-0 border-[#cfcfcf] flex items-center text-[10px] text-[#555]">
          <span className="ml-[21px]">COMMENTS</span>
          <span className="absolute left-[275px] w-[9px] h-[9px] rounded-full bg-[#222] flex items-center justify-center text-white text-[9px] leading-none">+</span>
          <span className="absolute left-[291px] w-[3px] h-[10px] border-x border-[#888]" />
        </div>
        <div className="absolute left-[286px] top-[398px] w-[118px] h-[27px] flex items-center justify-center text-[25.500px] text-[#1450f5] leading-none whitespace-nowrap">
          <svg width="118" height="27" viewBox="0 0 118 27" className="absolute left-0 top-0">
            <rect x=".5" y=".5" width="117" height="26" fill="none" stroke="#e0a270" strokeWidth="1" strokeDasharray="9 5" />
          </svg>
          <span className="relative">Gap 5 mm</span>
        </div>
        <NavBar />
        <div className="absolute left-[1499px] top-[649px] text-[10.500px] font-bold text-[#444]">Daaa v6</div>
        <ViewCube />
        <Dialog />
      </div>
      <Timeline />
    </div>
  );
}
